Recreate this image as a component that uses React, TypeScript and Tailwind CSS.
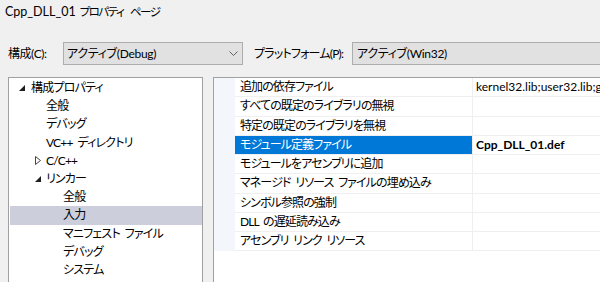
import React from "react";

const treeItems: { label: string; level: number; arrow?: "open" | "closed"; selected?: boolean }[] = [
  { label: "構成プロパティ", level: 0, arrow: "open" },
  { label: "全般", level: 1 },
  { label: "デバッグ", level: 1 },
  { label: "VC++ ディレクトリ", level: 1 },
  { label: "C/C++", level: 1, arrow: "closed" },
  { label: "リンカー", level: 1, arrow: "open" },
  { label: "全般", level: 2 },
  { label: "入力", level: 2, selected: true },
  { label: "マニフェスト ファイル", level: 2 },
  { label: "デバッグ", level: 2 },
  { label: "システム", level: 2 },
];

const gridRows: { name: string; value?: string; selected?: boolean }[] = [
  { name: "追加の依存ファイル", value: "kernel32.lib;user32.lib;gdi32.lib;winspool.lib;comdlg32.lib;advapi32.lib;shell32.lib;ole32.lib;oleaut32.lib;uuid.lib;odbc32.lib;odbccp32.lib;%(AdditionalDependencies)" },
  { name: "すべての既定のライブラリの無視" },
  { name: "特定の既定のライブラリを無視" },
  { name: "モジュール定義ファイル", value: "Cpp_DLL_01.def", selected: true },
  { name: "モジュールをアセンブリに追加" },
  { name: "マネージド リソース ファイルの埋め込み" },
  { name: "シンボル参照の強制" },
  { name: "DLL の遅延読み込み" },
  { name: "アセンブリ リンク リソース" },
];

function OpenArrow() {
  return (
    <svg width="6" height="6" viewBox="0 0 6 6" className="block">
      <polygon points="6,0 6,6 0,6" fill="#1e1e1e" />
    </svg>
  );
}

function ClosedArrow() {
  return (
    <svg width="6" height="9" viewBox="0 0 6 9" className="block">
      <polygon points="0.5,0.5 5.5,4.5 0.5,8.5" fill="none" stroke="#444" strokeWidth="1" />
    </svg>
  );
}

function Chevron() {
  return (
    <svg width="9" height="6" viewBox="0 0 9 6" className="block">
      <polyline points="0.5,0.5 4.5,4.5 8.5,0.5" fill="none" stroke="#606060" strokeWidth="1" />
    </svg>
  );
}

export default function App() {
  return (
    <div className="w-[600px] h-[282px] overflow-hidden bg-[#f0f0f0] text-[#000] font-['Lato','Noto_Sans_CJK_JP',sans-serif] [font-feature-settings:'palt'] text-[12px] leading-none">
      {/* title */}
      <div className="h-[24px] pl-[5px] flex items-center text-[12.5px] whitespace-nowrap">
        <span>Cpp_DLL_01</span>
        <span className="ml-[4px] text-[11.5px] tracking-[-1.5px] [word-spacing:5px]">プロパティ ページ</span>
      </div>

      {/* combo row */}
      <div className="mt-[18px] h-[23px] flex items-center">
        <div className="w-[63px] shrink-0 pl-[8px] whitespace-nowrap tracking-[-0.5px]">構成(C):</div>
        <div className="w-[180px] h-[23px] shrink-0 bg-[#e1e1e1] border border-[#adadad] flex items-center justify-between pl-[3px] pr-[4px]">
          <span className="whitespace-nowrap tracking-[-0.3px]">アクティブ(Debug)</span>
          <Chevron />
        </div>
        <div className="ml-[11px] w-[98px] shrink-0 whitespace-nowrap tracking-[-0.8px]">プラットフォーム(P):</div>
        <div className="w-[300px] h-[23px] shrink-0 bg-[#e1e1e1] border border-[#adadad] flex items-center pl-[4px]">
          <span className="whitespace-nowrap tracking-[-0.3px]">アクティブ(Win32)</span>
        </div>
      </div>

      {/* panels */}
      <div className="mt-[12px] flex">
        {/* tree */}
        <div className="ml-[8px] w-[195px] h-[240px] shrink-0 bg-white border border-[#a0a0a0] pt-[1px] pl-[1px]">
          {treeItems.map((it, i) => (
            <div
              key={i}
              className={`h-[18.2px] flex items-center ${it.selected ? "bg-[#cccedb]" : ""}`}
            >
              <div
                className={`shrink-0 flex items-center justify-end pr-[5px] ${
                  it.level === 0 ? "w-[20px]" : it.level === 1 ? "w-[36px]" : "w-[52px]"
                }`}
              >
                {it.arrow === "open" ? <OpenArrow /> : it.arrow === "closed" ? <ClosedArrow /> : null}
              </div>
              <span className={`whitespace-nowrap tracking-[-0.8px] [word-spacing:2.5px] ${it.level === 1 ? "ml-[0px]" : "ml-[1px]"}`}>
                {it.label}
              </span>
            </div>
          ))}
        </div>

        {/* property grid */}
        <div className="ml-[10px] w-[420px] h-[240px] shrink-0 bg-white border border-[#a0a0a0]">
          {gridRows.map((r, i) => (
            <div key={i} className="h-[19.25px] flex">
              <div className="w-[21px] shrink-0 bg-[#f3f6fb]" />
              <div
                className={`w-[237px] shrink-0 flex items-center pl-[5px] border-b border-[#efefef] whitespace-nowrap tracking-[-0.9px] [word-spacing:2.5px] ${
                  r.selected ? "bg-[#0078d7] text-white border-[#0078d7]" : ""
                }`}
              >
                {r.name}
              </div>
              <div className="w-[1px] shrink-0 bg-[#efefef]" />
              <div
                className={`flex-1 min-w-0 overflow-hidden flex items-center pl-[3px] border-b border-[#efefef] whitespace-nowrap ${
                  r.selected ? "font-bold" : ""
                }`}
              >
                {r.value ?? ""}
              </div>
            </div>
          ))}
        </div>
      </div>
    </div>
  );
}
